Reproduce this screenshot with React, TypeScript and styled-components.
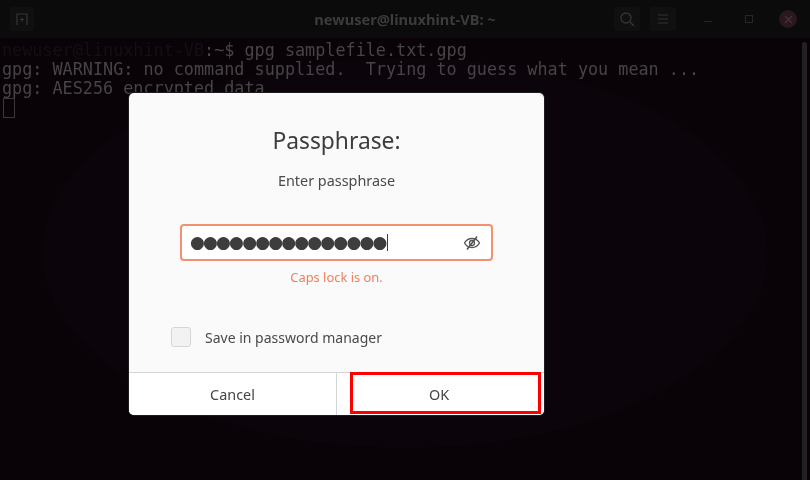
import React from "react";
import styled, { createGlobalStyle } from "styled-components";

const Global = createGlobalStyle`
  html, body { margin: 0; padding: 0; background: #090308; }
  #root { width: 810px; height: 480px; overflow: hidden; }
`;

const Screen = styled.div`
  position: relative;
  width: 810px;
  height: 480px;
  display: flex;
  flex-direction: column;
  overflow: hidden;
  background: #090308;
  filter: blur(0.4px);
`;

const TitleBar = styled.header`
  height: 38px;
  flex: none;
  display: grid;
  grid-template-columns: 1fr auto 1fr;
  align-items: center;
  background: #0c0b0c;
`;

const TabIcon = styled.div`
  width: 24px;
  height: 24px;
  margin-left: 10px;
  display: flex;
  align-items: center;
  justify-content: center;
  background: #101010;
  border-radius: 3px;
  color: #353535;
`;

const WindowTitle = styled.h1`
  margin: 0;
  text-align: center;
  font: 700 14.6px "Noto Sans", sans-serif;
  color: #3c3c3c;
`;

const Controls = styled.div`
  display: flex;
  align-items: center;
  justify-content: flex-end;
  gap: 10px;
  padding-right: 13px;
`;

const ToolButton = styled.div`
  width: 26px;
  height: 24px;
  display: flex;
  align-items: center;
  justify-content: center;
  background: #101010;
  border-radius: 3px;
  color: #333;
`;

const WindowButton = styled.div<{ $close?: boolean }>`
  width: 18px;
  height: 18px;
  margin-left: ${(p) => (p.$close ? "11px" : "13px")};
  border-radius: 50%;
  display: flex;
  align-items: center;
  justify-content: center;
  color: ${(p) => (p.$close ? "#4a3038" : "#262626")};
  background: ${(p) => (p.$close ? "#2a181e" : "transparent")};
`;

const Terminal = styled.main`
  flex: 1;
  display: flex;
  background: radial-gradient(ellipse 363px 195px at 405px 215px, #0b050b 99.5%, #090308 100%);
`;

const TerminalText = styled.pre`
  flex: 1;
  margin: 0;
  padding: 3px 0 0 2px;
  font: 16.8px/19px "DejaVu Sans Mono", monospace;
  color: #474447;
`;

const Prompt = styled.span`
  color: #150e15;
`;

const Cursor = styled.span`
  display: block;
  width: 12px;
  height: 20px;
  margin-left: 1px;
  border: 1px solid #3a373a;
  box-sizing: border-box;
`;

const Scrollbar = styled.div`
  width: 5px;
  margin: 4px 3px 0 0;
  background: #232023;
  border-radius: 3px 3px 0 0;
`;

const Dialog = styled.section`
  position: absolute;
  left: 129px;
  top: 93px;
  width: 415px;
  height: 322px;
  box-sizing: border-box;
  display: flex;
  flex-direction: column;
  background: #fafafa;
  border-radius: 5px;
  box-shadow: 0 0 0 1px #1c1c1c;
  font-family: "Noto Sans", sans-serif;
  overflow: hidden;
`;

const DialogBody = styled.div`
  height: 279px;
  flex: none;
  box-sizing: border-box;
  padding-top: 31px;
  display: flex;
  flex-direction: column;
  align-items: center;
`;

const Heading = styled.h2`
  margin: 0;
  font-size: 22.8px;
  line-height: 34px;
  font-weight: 400;
  color: #3d3d3d;
`;

const Message = styled.p`
  margin: 13px 0 0;
  font-size: 14.4px;
  line-height: 20px;
  color: #4a4a4a;
`;

const Field = styled.div`
  margin-top: 33px;
  width: 313px;
  height: 37px;
  box-sizing: border-box;
  border: 2px solid #f2906f;
  border-radius: 4px;
  background: #fff;
  display: flex;
  align-items: center;
  padding: 0 10px 0 8px;
`;

const Dots = styled.span`
  font: 17px/1 "DejaVu Sans", sans-serif;
  letter-spacing: -1.8px;
  color: #3d3d3d;
`;

const Caret = styled.span`
  width: 1px;
  height: 17px;
  margin-left: 1px;
  background: #3d3d3d;
`;

const EyeSlot = styled.span`
  margin-left: auto;
  display: flex;
  color: #555;
`;

const Warning = styled.p`
  margin: 6px 0 0;
  font-size: 12.9px;
  line-height: 20px;
  color: #ee7f5c;
`;

const CheckRow = styled.label`
  align-self: flex-start;
  margin: 40px 0 0 42px;
  display: flex;
  align-items: center;
  gap: 14px;
  font-size: 14px;
  color: #4a4a4a;
`;

const Checkbox = styled.span`
  width: 20px;
  height: 20px;
  box-sizing: border-box;
  border: 1px solid #d6d6d6;
  border-radius: 3px;
  background: #f2f2f2;
`;

const Actions = styled.div`
  flex: 1;
  display: grid;
  grid-template-columns: 207px 1fr;
  border-top: 1px solid #d4d4d4;
`;

const Action = styled.button<{ $trim?: boolean }>`
  position: relative;
  border: 0;
  padding: 0 ${(p) => (p.$trim ? "3px" : "0")} 0 0;
  background: #fff;
  font: 14.4px "Noto Sans", sans-serif;
  color: #444;
  & + & { border-left: 1px solid #d4d4d4; }
`;

const FocusBox = styled.span`
  position: absolute;
  left: 13px;
  top: -1px;
  width: 191px;
  height: 42px;
  box-sizing: border-box;
  border: 3px solid #ff0000;
`;

export default function App() {
  return (
    <>
      <Global />
      <Screen>
        <TitleBar>
          <TabIcon>
            <svg width="14" height="14" viewBox="0 0 14 14" fill="none" stroke="currentColor" strokeWidth="1.2">
              <path d="M2 13V2h10v11" />
              <path d="M7 5.5v4M5 7.5h4" />
            </svg>
          </TabIcon>
          <WindowTitle>newuser@linuxhint-VB: ~</WindowTitle>
          <Controls>
            <ToolButton>
              <svg width="16" height="16" viewBox="0 0 16 16" fill="none" stroke="currentColor" strokeWidth="1.4">
                <circle cx="7" cy="7" r="5" />
                <path d="M10.5 10.5 15 15" />
              </svg>
            </ToolButton>
            <ToolButton>
              <svg width="12" height="12" viewBox="0 0 12 12" stroke="currentColor" strokeWidth="1.2">
                <path d="M1 2h10M1 6h10M1 10h10" />
              </svg>
            </ToolButton>
            <WindowButton>
              <svg width="8" height="8" viewBox="0 0 8 8" stroke="currentColor"><path d="M0 6.5h8" /></svg>
            </WindowButton>
            <WindowButton>
              <svg width="8" height="8" viewBox="0 0 8 8" fill="none" stroke="currentColor"><rect x="0.5" y="0.5" width="7" height="7" /></svg>
            </WindowButton>
            <WindowButton $close>
              <svg width="9" height="9" viewBox="0 0 9 9" stroke="currentColor" strokeWidth="1.2"><path d="M1 1l7 7M8 1 1 8" /></svg>
            </WindowButton>
          </Controls>
        </TitleBar>
        <Terminal>
          <TerminalText>
            <Prompt>newuser@linuxhint-VB</Prompt>:~$ gpg samplefile.txt.gpg{"\n"}
            gpg: WARNING: no command supplied.  Trying to guess what you mean ...{"\n"}
            gpg: AES256 encrypted data{"\n"}
            <Cursor />
          </TerminalText>
          <Scrollbar />
        </Terminal>
        <Dialog>
          <DialogBody>
            <Heading>Passphrase:</Heading>
            <Message>Enter passphrase</Message>
            <Field>
              <Dots>●●●●●●●●●●●●●●●</Dots>
              <Caret />
              <EyeSlot>
                <svg width="18" height="18" viewBox="0 0 18 18" fill="none" stroke="currentColor" strokeWidth="1.3">
                  <path d="M1.5 9S4 4.5 9 4.5 16.5 9 16.5 9 14 13.5 9 13.5 1.5 9 1.5 9Z" />
                  <circle cx="9" cy="9" r="2.5" />
                  <path d="M14 2.5 4 15.5" strokeWidth="1.6" />
                </svg>
              </EyeSlot>
            </Field>
            <Warning>Caps lock is on.</Warning>
            <CheckRow>
              <Checkbox />
              Save in password manager
            </CheckRow>
          </DialogBody>
          <Actions>
            <Action>Cancel</Action>
            <Action $trim>
              OK
              <FocusBox />
            </Action>
          </Actions>
        </Dialog>
      </Screen>
    </>
  );
}
